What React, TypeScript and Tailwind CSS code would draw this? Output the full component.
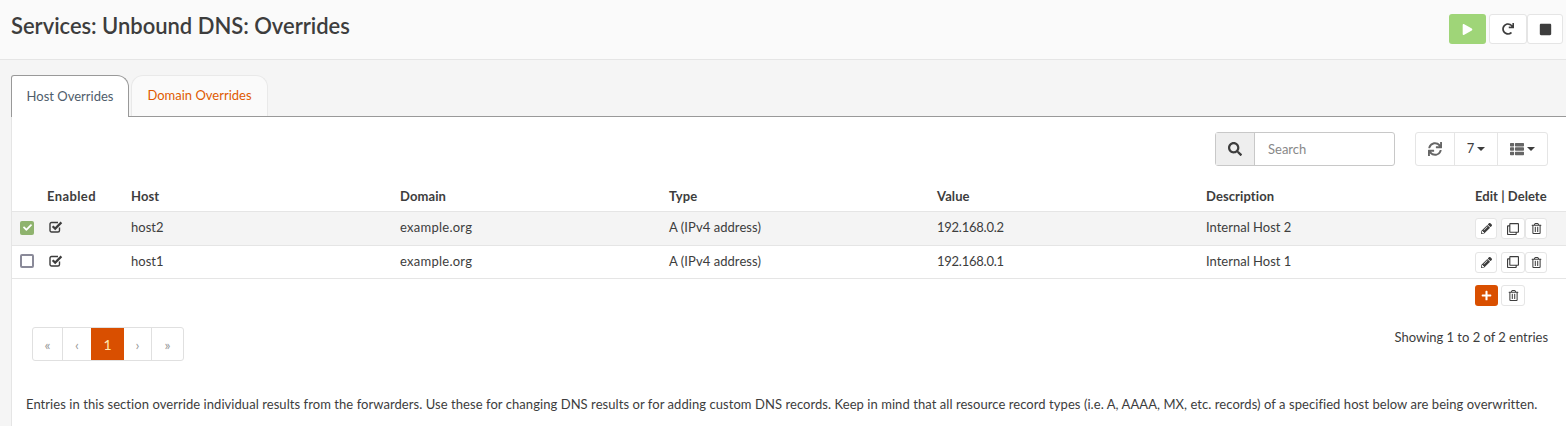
import React from 'react';
import {
  FaPlay,
  FaRedo,
  FaStop,
  FaSearch,
  FaSync,
  FaThList,
  FaPencilAlt,
  FaRegClone,
  FaRegTrashAlt,
  FaPlus,
  FaCheck,
} from 'react-icons/fa';

const rows = [
  { host: 'host2', value: '192.168.0.2', description: 'Internal Host 2', selected: true, height: 'h-[34px]', text: 'pb-[2px]' },
  { host: 'host1', value: '192.168.0.1', description: 'Internal Host 1', selected: false, height: 'h-[33px]', text: 'pb-px' },
];

const columns = 'grid grid-cols-[35px_84px_269px_269px_268px_269px_1fr_auto]';

const IconButton: React.FC<{ children: React.ReactNode; className?: string }> = ({ children, className }) => (
  <div className={`flex h-[21px] items-center justify-center rounded-[3px] border border-[#e5e5e5] bg-white text-[#3d3d3d] ${className ?? ''}`}>
    {children}
  </div>
);

const Caret = () => <span className="ml-[3px] h-0 w-0 border-x-[4px] border-t-[4px] border-x-transparent border-t-[#3d3d3d]" />;

const PageCell: React.FC<{ children: React.ReactNode; className?: string }> = ({ children, className }) => (
  <div className={`flex h-full items-center justify-center text-[14px] ${className ?? ''}`}>{children}</div>
);

// font awesome 4 check-square-o, heavier than the one in the icon package
const EnabledIcon = () => (
  <svg width="14" height="12" viewBox="0 0 14 12" fill="none" className="mb-[3px] ml-[2px]">
    <path d="M10.5 6.5V9.5C10.5 10.3 9.8 11 9 11H2.5C1.7 11 1 10.3 1 9.5V3C1 2.2 1.7 1.5 2.5 1.5H9" stroke="#3d3d3d" strokeWidth="1.4" />
    <path d="M3.6 5.2L6.2 7.6L12.4 1.4" stroke="#3d3d3d" strokeWidth="2.2" />
  </svg>
);

export default function App() {
  return (
    <div className="h-[426px] w-[1566px] overflow-hidden bg-[#f5f5f5] font-['Lato','Liberation_Sans',sans-serif] text-[13px] text-[#3d3d3d]">
      <header className="flex h-[60px] items-start justify-between border-b border-[#e5e5e5] bg-[#fafafa] pl-[11px] pr-[3px]">
        <h1 className="mt-[11px] text-[22px] leading-[30px] font-semibold tracking-[-0.03px] text-[#3d3d3d]">Services: Unbound DNS: Overrides</h1>
        <div className="mt-[14px] flex h-[30px]">
          <div className="mr-[3px] flex w-[37px] items-center justify-center rounded-[3px] bg-[#9fd578] text-white">
            <FaPlay size={11} />
          </div>
          <div className="flex w-[38px] items-center justify-center rounded-[3px] border border-[#e5e5e5] bg-white">
            <FaRedo size={12} />
          </div>
          <div className="flex w-[36px] items-center justify-center rounded-[3px] border border-[#e5e5e5] bg-white">
            <FaStop size={13} />
          </div>
        </div>
      </header>

      <nav className="flex h-[56px] items-end pl-[11px] pt-[15px]">
        <div className="relative z-10 -mb-px flex h-[42px] w-[118px] items-center justify-center rounded-tr-xl rounded-tl-[3px] border border-b-0 border-[#999] bg-white text-[#4f5d6b]">
          Host Overrides
        </div>
        <div className="ml-[2px] flex h-[41px] w-[137px] items-center justify-center rounded-t-xl border border-b-0 border-[#e9e9e9] bg-[#fafafa] text-[#e05a00]">
          Domain Overrides
        </div>
      </nav>

      <main className="ml-[11px] h-[310px] border-l border-t border-l-[#e5e5e5] border-t-[#999] bg-white">
        <div className="flex justify-end pr-[18px] pt-[15px]">
          <div className="flex h-[34px] w-[180px] rounded-[3px] border border-[#c8c8c8]">
            <div className="flex w-[39px] items-center justify-center border-r border-[#c8c8c8] bg-[#eeeeee]">
              <FaSearch size={14} />
            </div>
            <div className="flex flex-1 items-center pl-[13px] pt-px text-[#888]">Search</div>
          </div>
          <div className="ml-[20px] flex h-[34px] w-[133px] rounded-[3px] border border-[#e5e5e5]">
            <div className="flex w-[39px] items-center justify-center border-r border-[#e5e5e5] text-[#666]">
              <FaSync size={14} />
            </div>
            <div className="flex w-[43px] items-center justify-center border-r border-[#e5e5e5]">
              7<Caret />
            </div>
            <div className="flex flex-1 items-center justify-center text-[#666]">
              <FaThList size={14} />
              <Caret />
            </div>
          </div>
        </div>

        <div className={`${columns} mt-[15px] h-[30px] items-center pr-[19px] pt-[2px] font-bold tracking-[0.1px]`}>
          <span />
          <span className="tracking-[0.4px]">Enabled</span>
          <span>Host</span>
          <span>Domain</span>
          <span>Type</span>
          <span>Value</span>
          <span>Description</span>
          <span className="w-[72px] whitespace-nowrap pr-px text-right tracking-[0.05px]">Edit | Delete</span>
        </div>

        {rows.map((row) => (
          <div
            key={row.host}
            className={`${columns} ${row.height} items-center border-t border-[#e5e5e5] pr-[19px] ${row.selected ? 'bg-[#f4f4f4]' : ''}`}
          >
            <div className="pb-[2px] pl-[8px]">
              {row.selected ? (
                <div className="flex h-[14px] w-[14px] items-center justify-center rounded-[2px] bg-[#8fb36e] text-white">
                  <FaCheck size={9} />
                </div>
              ) : (
                <div className="h-[14px] w-[14px] rounded-[2px] border-2 border-[#8a8a99] bg-white" />
              )}
            </div>
            <EnabledIcon />
            <span className={row.text}>{row.host}</span>
            <span className={`${row.text} tracking-[0.25px]`}>example.org</span>
            <span className={`${row.text} tracking-[0.06px]`}>A (IPv4 address)</span>
            <span className={`${row.text} tracking-[-0.25px]`}>{row.value}</span>
            <span className={row.text}>{row.description}</span>
            <div className="flex w-[72px] items-center">
              <IconButton className="w-[22px]">
                <FaPencilAlt size={11} />
              </IconButton>
              <IconButton className="ml-[4px] w-[24px]">
                <FaRegClone size={12} />
              </IconButton>
              <IconButton className="w-[22px]">
                <FaRegTrashAlt size={11} />
              </IconButton>
            </div>
          </div>
        ))}

        <div className="flex justify-end border-t border-[#e5e5e5] pr-[19px] pt-[6px]">
          <div className="flex w-[72px] items-center">
            <div className="flex h-[21px] w-[23px] items-center justify-center rounded-[3px] bg-[#d94f00] text-white">
              <FaPlus size={11} />
            </div>
            <IconButton className="ml-[3px] w-[24px]">
              <FaRegTrashAlt size={11} />
            </IconButton>
          </div>
        </div>

        <div className="mt-[21px] flex items-start justify-between pl-[20px] pr-[18px]">
          <div className="flex h-[34px] w-[152px] rounded-[3px] border border-[#e0e0e0] text-[#999]">
            <PageCell className="w-[30px] border-r border-[#e0e0e0]">«</PageCell>
            <PageCell className="w-[28px]">‹</PageCell>
            <PageCell className="w-[33px] bg-[#d94f00] text-[#ffe9b0]">1</PageCell>
            <PageCell className="w-[28px] border-r border-[#e0e0e0]">›</PageCell>
            <PageCell className="flex-1">»</PageCell>
          </div>
          <span className="mt-[1px] tracking-[-0.02px]">Showing 1 to 2 of 2 entries</span>
        </div>

        <p className="mt-[34px] whitespace-nowrap pl-[14px] tracking-[0.06px]">
          Entries in this section override individual results from the forwarders. Use these for changing DNS results or for adding custom DNS records. Keep in mind that all resource record types (i.e. A, AAAA, MX, etc. records) of a specified host below are being overwritten.
        </p>
      </main>
    </div>
  );
}
